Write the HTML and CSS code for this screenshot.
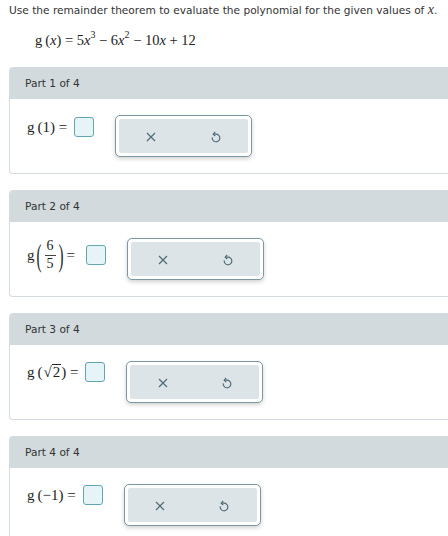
FILE: index.html
```html
<!DOCTYPE html>
<html>
<head>
<meta charset="utf-8">
<link rel="stylesheet" href="styles.css">
</head>
<body>
<div class="page">
  <div class="intro">Use the remainder theorem to evaluate the polynomial for the given values of <i class="var">x</i>.</div>
  <div class="formula"><span class="m">g</span>&thinsp;(<i>x</i>) = 5<i>x</i><sup>3</sup> − 6<i>x</i><sup>2</sup> − 10<i>x</i> + 12</div>

  <section class="part">
    <div class="part-head">Part 1 of 4</div>
    <div class="part-body">
      <div class="answer a1"><span class="math">g&thinsp;(1) =</span><span class="input"></span></div>
      <div class="tools"><div class="tools-inner">
        <span class="tool"><svg width="10" height="10" viewBox="0 0 10 10"><path d="M1 1L9 9M9 1L1 9" stroke="#4f6b77" stroke-width="1.2" fill="none"/></svg></span>
        <span class="tool"><svg width="10" height="12" viewBox="0 0 10 12"><path d="M3.2 3.2H5A3.8 3.8 0 1 1 1.3 6.3" stroke="#4f6b77" stroke-width="1.2" fill="none"/><path d="M4.2 1L2.2 3.2L4.2 5" stroke="#4f6b77" stroke-width="1.2" fill="none"/></svg></span>
      </div></div>
    </div>
  </section>

  <section class="part">
    <div class="part-head">Part 2 of 4</div>
    <div class="part-body">
      <div class="answer a2"><span class="math">g<span class="paren">(</span><span class="frac"><span class="num">6</span><span class="den">5</span></span><span class="paren">)</span>=</span><span class="input"></span></div>
      <div class="tools"><div class="tools-inner">
        <span class="tool"><svg width="10" height="10" viewBox="0 0 10 10"><path d="M1 1L9 9M9 1L1 9" stroke="#4f6b77" stroke-width="1.2" fill="none"/></svg></span>
        <span class="tool"><svg width="10" height="12" viewBox="0 0 10 12"><path d="M3.2 3.2H5A3.8 3.8 0 1 1 1.3 6.3" stroke="#4f6b77" stroke-width="1.2" fill="none"/><path d="M4.2 1L2.2 3.2L4.2 5" stroke="#4f6b77" stroke-width="1.2" fill="none"/></svg></span>
      </div></div>
    </div>
  </section>

  <section class="part">
    <div class="part-head">Part 3 of 4</div>
    <div class="part-body">
      <div class="answer a3"><span class="math">g&thinsp;(<span class="rad">√</span><span class="radicand">2</span>) =</span><span class="input"></span></div>
      <div class="tools"><div class="tools-inner">
        <span class="tool"><svg width="10" height="10" viewBox="0 0 10 10"><path d="M1 1L9 9M9 1L1 9" stroke="#4f6b77" stroke-width="1.2" fill="none"/></svg></span>
        <span class="tool"><svg width="10" height="12" viewBox="0 0 10 12"><path d="M3.2 3.2H5A3.8 3.8 0 1 1 1.3 6.3" stroke="#4f6b77" stroke-width="1.2" fill="none"/><path d="M4.2 1L2.2 3.2L4.2 5" stroke="#4f6b77" stroke-width="1.2" fill="none"/></svg></span>
      </div></div>
    </div>
  </section>

  <section class="part">
    <div class="part-head">Part 4 of 4</div>
    <div class="part-body">
      <div class="answer a4"><span class="math">g&thinsp;(−1) =</span><span class="input"></span></div>
      <div class="tools"><div class="tools-inner">
        <span class="tool"><svg width="10" height="10" viewBox="0 0 10 10"><path d="M1 1L9 9M9 1L1 9" stroke="#4f6b77" stroke-width="1.2" fill="none"/></svg></span>
        <span class="tool"><svg width="10" height="12" viewBox="0 0 10 12"><path d="M3.2 3.2H5A3.8 3.8 0 1 1 1.3 6.3" stroke="#4f6b77" stroke-width="1.2" fill="none"/><path d="M4.2 1L2.2 3.2L4.2 5" stroke="#4f6b77" stroke-width="1.2" fill="none"/></svg></span>
      </div></div>
    </div>
  </section>
</div>
</body>
</html>
```

FILE: styles.css
```css
html, body {
  margin: 0;
  padding: 0;
  background: #ffffff;
  overflow: hidden;
}
.page {
  padding: 2px 0 0 9px;
  font-family: "DejaVu Sans", Verdana, sans-serif;
  font-size: 10.6px;
  color: #333333;
}
.intro {
  line-height: 16px;
  white-space: nowrap;
}
.var {
  font-family: "Liberation Serif", serif;
  font-size: 14px;
}
.formula {
  margin-top: 12px;
  padding-left: 26px;
  height: 20px;
  line-height: 20px;
  font-family: "Liberation Serif", serif;
  font-size: 14.5px;
  color: #222222;
  white-space: nowrap;
}
.formula sup {
  font-size: 10px;
  line-height: 0;
  vertical-align: 7px;
}
.part {
  margin-top: 17px;
  border: 1px solid #d3dbde;
  border-right: none;
  border-radius: 4px 0 0 4px;
  overflow: hidden;
}
.part + .part {
  margin-top: 16px;
}
.part-head {
  height: 31px;
  line-height: 31px;
  background: #d2dadd;
  padding-left: 15px;
  margin-top: -1px;
  padding-top: 1px;
  color: #333333;
}
.part-body {
  display: flex;
  align-items: flex-start;
  padding: 16px 0 16px 17px;
  height: 42px;
}
.answer {
  display: flex;
  align-items: center;
  margin-right: 21px;
}
.a1 { margin-top: 2px; }
.a2 { margin-top: 0; }
.a3 { margin-top: 1px; }
.a4 { margin-top: 1px; }
.math {
  display: inline-flex;
  align-items: center;
  font-family: "Liberation Serif", serif;
  font-size: 15px;
  line-height: 20px;
  color: #222222;
  white-space: pre;
  margin-right: 7px;
}
.a2 .math {
  margin-right: 11px;
}
.paren {
  display: inline-block;
  font-size: 15px;
  line-height: 34px;
  height: 34px;
  transform: scaleY(2.1);
  margin: 0 2px;
}
.paren + .frac {
  margin-left: 1px;
}
.frac {
  display: inline-flex;
  flex-direction: column;
  align-items: center;
  font-size: 14px;
  line-height: 14px;
  margin: 0 1px;
}
.frac + .paren {
  margin-right: 3px;
}
.num {
  border-bottom: 1px solid #444;
  padding: 0 2px 2px;
}
.den {
  padding-top: 1px;
}
.rad {
  margin-left: 1px;
}
.radicand {
  border-top: 1px solid #222;
  line-height: 15px;
  padding: 0 1px;
}
.input {
  width: 18px;
  height: 18px;
  border: 1px solid #62a6b4;
  border-radius: 3px;
  background: #e6f4f8;
}
.tools {
  width: 129px;
  height: 34px;
  padding: 3px;
  border: 1px solid #7b97a2;
  border-radius: 5px;
  background: #ffffff;
  box-shadow: 0 2px 4px rgba(0, 0, 0, 0.18);
}
.tools-inner {
  display: flex;
  height: 34px;
  background: #dde4e7;
  border-radius: 2px;
}
.tool {
  flex: 1;
  display: flex;
  align-items: center;
  justify-content: center;
  padding-top: 2px;
}
```
